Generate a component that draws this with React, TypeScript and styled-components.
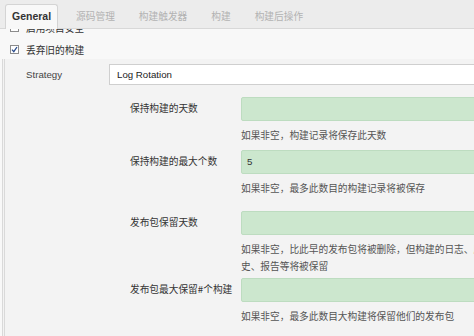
import React from "react";
import styled, { createGlobalStyle } from "styled-components";

const GlobalStyle = createGlobalStyle`
  html, body {
    margin: 0;
    padding: 0;
    overflow: hidden;
    background: #f8f8f8;
  }
  body {
    font-family: "Liberation Sans", "Noto Sans CJK SC", sans-serif;
  }
`;

const cjk = `"Noto Sans CJK SC", "Liberation Sans", sans-serif`;

const Page = styled.div`
  width: 490px;
  height: 336px;
  overflow: hidden;
  background: #f8f8f8;
  display: flex;
  flex-direction: column;
`;

const TabBar = styled.div`
  display: flex;
  align-items: flex-end;
  height: 29px;
  box-sizing: border-box;
  padding-left: 5px;
  background: #ececec;
  border-bottom: 1px solid #d8d8d8;
  position: relative;
  z-index: 1;
  flex-shrink: 0;
`;

const ActiveTab = styled.div`
  height: 25px;
  box-sizing: border-box;
  margin-bottom: -1px;
  margin-right: 6px;
  padding: 0 6px;
  background: #f8f8f8;
  border: 1px solid #d4d4d4;
  border-bottom: none;
  border-radius: 3px 3px 0 0;
  font-family: "Liberation Sans", sans-serif;
  font-weight: bold;
  font-size: 10.5px;
  line-height: 23px;
  color: #333;
`;

const Tab = styled.div`
  height: 24px;
  padding: 0 12px;
  font-family: ${cjk};
  font-size: 9.7px;
  line-height: 24px;
  color: #b2b2b2;
`;

const Content = styled.div`
  flex: 1;
  overflow: hidden;
`;

const CheckRow = styled.div<{ $cut?: boolean }>`
  display: flex;
  align-items: center;
  gap: 7px;
  height: 17px;
  padding-left: 10px;
  margin-top: ${(p) => (p.$cut ? "-10px" : "5px")};
  font-family: ${cjk};
  font-size: 9.7px;
  color: #333;
`;

const Box = styled.span`
  width: 9px;
  height: 9px;
  box-sizing: border-box;
  border: 1px solid #8c8c8c;
  background: #fff;
  display: inline-flex;
  align-items: center;
  justify-content: center;
`;

const Section = styled.div`
  margin: 1px 0 0 2px;
  border-left: 3px double #d9d9d9;
  border-bottom: 1px solid #e4e4e4;
  background: #f3f3f3;
  padding: 5px 0 11px 0;
`;

const StrategyRow = styled.div`
  display: grid;
  grid-template-columns: 83px 1fr;
  padding-left: 21px;
  align-items: center;
`;

const StrategyLabel = styled.div`
  font-family: "Liberation Sans", sans-serif;
  font-size: 9.7px;
  color: #444;
  line-height: 20px;
`;

const Select = styled.div`
  height: 21px;
  box-sizing: border-box;
  background: #fff;
  border: 1px solid #cfcfcf;
  padding-left: 7px;
  font-family: "Liberation Sans", sans-serif;
  font-size: 9.7px;
  line-height: 19px;
  color: #1a1a1a;
`;

const Field = styled.div<{ $top: number }>`
  display: grid;
  grid-template-columns: 111px 246px;
  padding-left: 125px;
  margin-top: ${(p) => p.$top}px;
`;

const Label = styled.div`
  font-family: ${cjk};
  font-size: 9.7px;
  line-height: 22px;
  color: #333;
  white-space: nowrap;
`;

const Input = styled.div`
  height: 24px;
  box-sizing: border-box;
  background: #cce7ce;
  border: 1px solid #bddcc0;
  border-radius: 2px 0 0 2px;
  padding-left: 5px;
  font-family: "Liberation Sans", sans-serif;
  font-size: 9.7px;
  line-height: 22px;
  color: #333;
`;

const Help = styled.div`
  grid-column: 2;
  padding-top: 6px;
  font-family: ${cjk};
  font-size: 9.7px;
  line-height: 17px;
  color: #555;
`;

const fields = [
  { top: 12, label: "保持构建的天数", value: "", help: "如果非空，构建记录将保存此天数" },
  { top: 6, label: "保持构建的最大个数", value: "5", help: "如果非空，最多此数目的构建记录将被保存" },
  {
    top: 14,
    label: "发布包保留天数",
    value: "",
    help: "如果非空，比此早的发布包将被删除，但构建的日志、历史、报告等将被保留",
  },
  { top: 3, label: "发布包最大保留#个构建", value: "", help: "如果非空，最多此数目大构建将保留他们的发布包" },
];

function Check({ checked }: { checked?: boolean }) {
  return (
    <Box>
      {checked && (
        <svg width="7" height="7" viewBox="0 0 7 7">
          <path d="M1 3.6 L2.8 5.6 L6 1" fill="none" stroke="#2a4c8c" strokeWidth="1.3" />
        </svg>
      )}
    </Box>
  );
}

export default function App() {
  return (
    <Page>
      <GlobalStyle />
      <TabBar>
        <ActiveTab>General</ActiveTab>
        <Tab>源码管理</Tab>
        <Tab>构建触发器</Tab>
        <Tab>构建</Tab>
        <Tab>构建后操作</Tab>
      </TabBar>
      <Content>
        <CheckRow $cut>
          <Check />
          启用项目安全
        </CheckRow>
        <CheckRow>
          <Check checked />
          丢弃旧的构建
        </CheckRow>
        <Section>
          <StrategyRow>
            <StrategyLabel>Strategy</StrategyLabel>
            <Select>Log Rotation</Select>
          </StrategyRow>
          {fields.map((f) => (
            <Field key={f.label} $top={f.top}>
              <Label>{f.label}</Label>
              <Input>{f.value}</Input>
              <Help>{f.help}</Help>
            </Field>
          ))}
        </Section>
      </Content>
    </Page>
  );
}
